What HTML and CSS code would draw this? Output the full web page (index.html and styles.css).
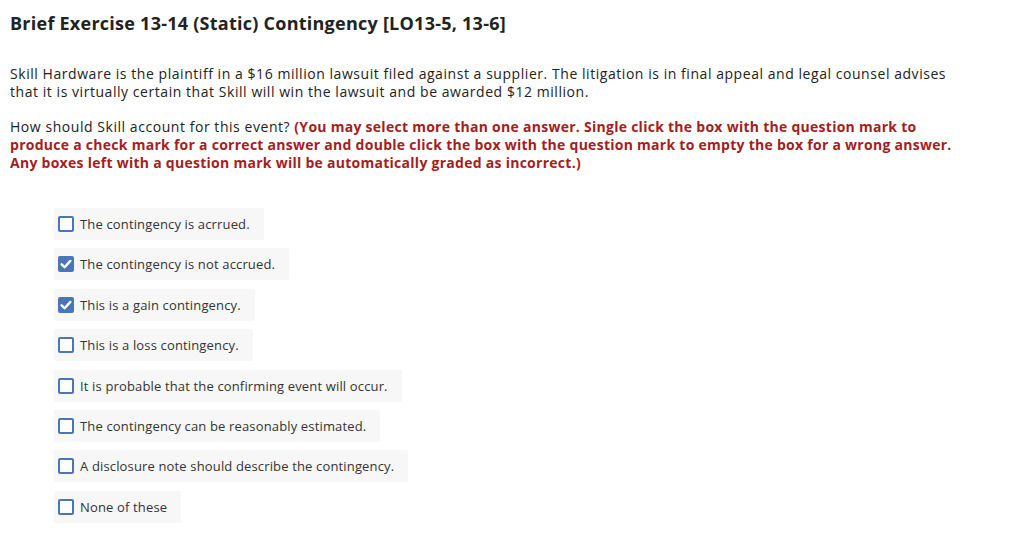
FILE: index.html
```html
<!DOCTYPE html>
<html>
<head>
<meta charset="utf-8">
<link rel="stylesheet" href="styles.css">
</head>
<body>
<div class="page">
  <h1 class="title">Brief Exercise 13-14 (Static) Contingency [LO13-5, 13-6]</h1>
  <p class="para">Skill Hardware is the plaintiff in a $16 million lawsuit filed against a supplier. The litigation is in final appeal and legal counsel advises<br>that it is virtually certain that Skill will win the lawsuit and be awarded $12 million.</p>
  <p class="para q">How should Skill account for this event? <span class="note">(You may select more than one answer. Single click the box with the question mark to<br>produce a check mark for a correct answer and double click the box with the question mark to empty the box for a wrong answer.<br>Any boxes left with a question mark will be automatically graded as incorrect.)</span></p>
  <div class="options">
    <div class="opt"><span class="box"></span><span class="label">The contingency is acrrued.</span></div>
    <div class="opt"><span class="box checked"><svg viewBox="0 0 16 16" width="16" height="16"><path d="M3.6 8.3 L6.6 11.2 L12.4 4.9" fill="none" stroke="#fff" stroke-width="2.4" stroke-linecap="round" stroke-linejoin="round"/></svg></span><span class="label">The contingency is not accrued.</span></div>
    <div class="opt"><span class="box checked"><svg viewBox="0 0 16 16" width="16" height="16"><path d="M3.6 8.3 L6.6 11.2 L12.4 4.9" fill="none" stroke="#fff" stroke-width="2.4" stroke-linecap="round" stroke-linejoin="round"/></svg></span><span class="label">This is a gain contingency.</span></div>
    <div class="opt"><span class="box"></span><span class="label">This is a loss contingency.</span></div>
    <div class="opt"><span class="box"></span><span class="label">It is probable that the confirming event will occur.</span></div>
    <div class="opt"><span class="box"></span><span class="label">The contingency can be reasonably estimated.</span></div>
    <div class="opt"><span class="box"></span><span class="label">A disclosure note should describe the contingency.</span></div>
    <div class="opt"><span class="box"></span><span class="label">None of these</span></div>
  </div>
</div>
</body>
</html>
```
FILE: styles.css
```css
html, body { margin: 0; padding: 0; background: #fff; }
body { font-family: "Open Sans", "Lato", sans-serif; color: #222; }
.page { padding: 12px 10px 0 10px; }
.title { font-size: 18px; font-weight: 700; margin: 0; line-height: 22px; color: #222; letter-spacing: 0.25px; }
.para { font-size: 14px; line-height: 18px; margin: 0; color: #222; white-space: nowrap; letter-spacing: 0.55px; }
.title + .para { margin-top: 31px; }
.q { margin-top: 17px; }
.note { color: #a51d1d; font-weight: 700; letter-spacing: 0.27px; }
.options { display: flex; flex-direction: column; align-items: flex-start; gap: 8.4px; margin-top: 36px; margin-left: 44px; }
.opt { display: flex; align-items: center; gap: 6px; background: #f7f7f7; height: 32px; padding: 0 14px 0 4px; border-radius: 2px; }
.box { width: 16px; height: 16px; box-sizing: border-box; border: 2px solid #4a76b7; border-radius: 2px; background: #fff; display: flex; }
.box.checked { background: #4a76b7; border-color: #4a76b7; }
.box.checked svg { margin: -2px; }
.label { font-size: 13px; color: #333; letter-spacing: 0.15px; }
```
